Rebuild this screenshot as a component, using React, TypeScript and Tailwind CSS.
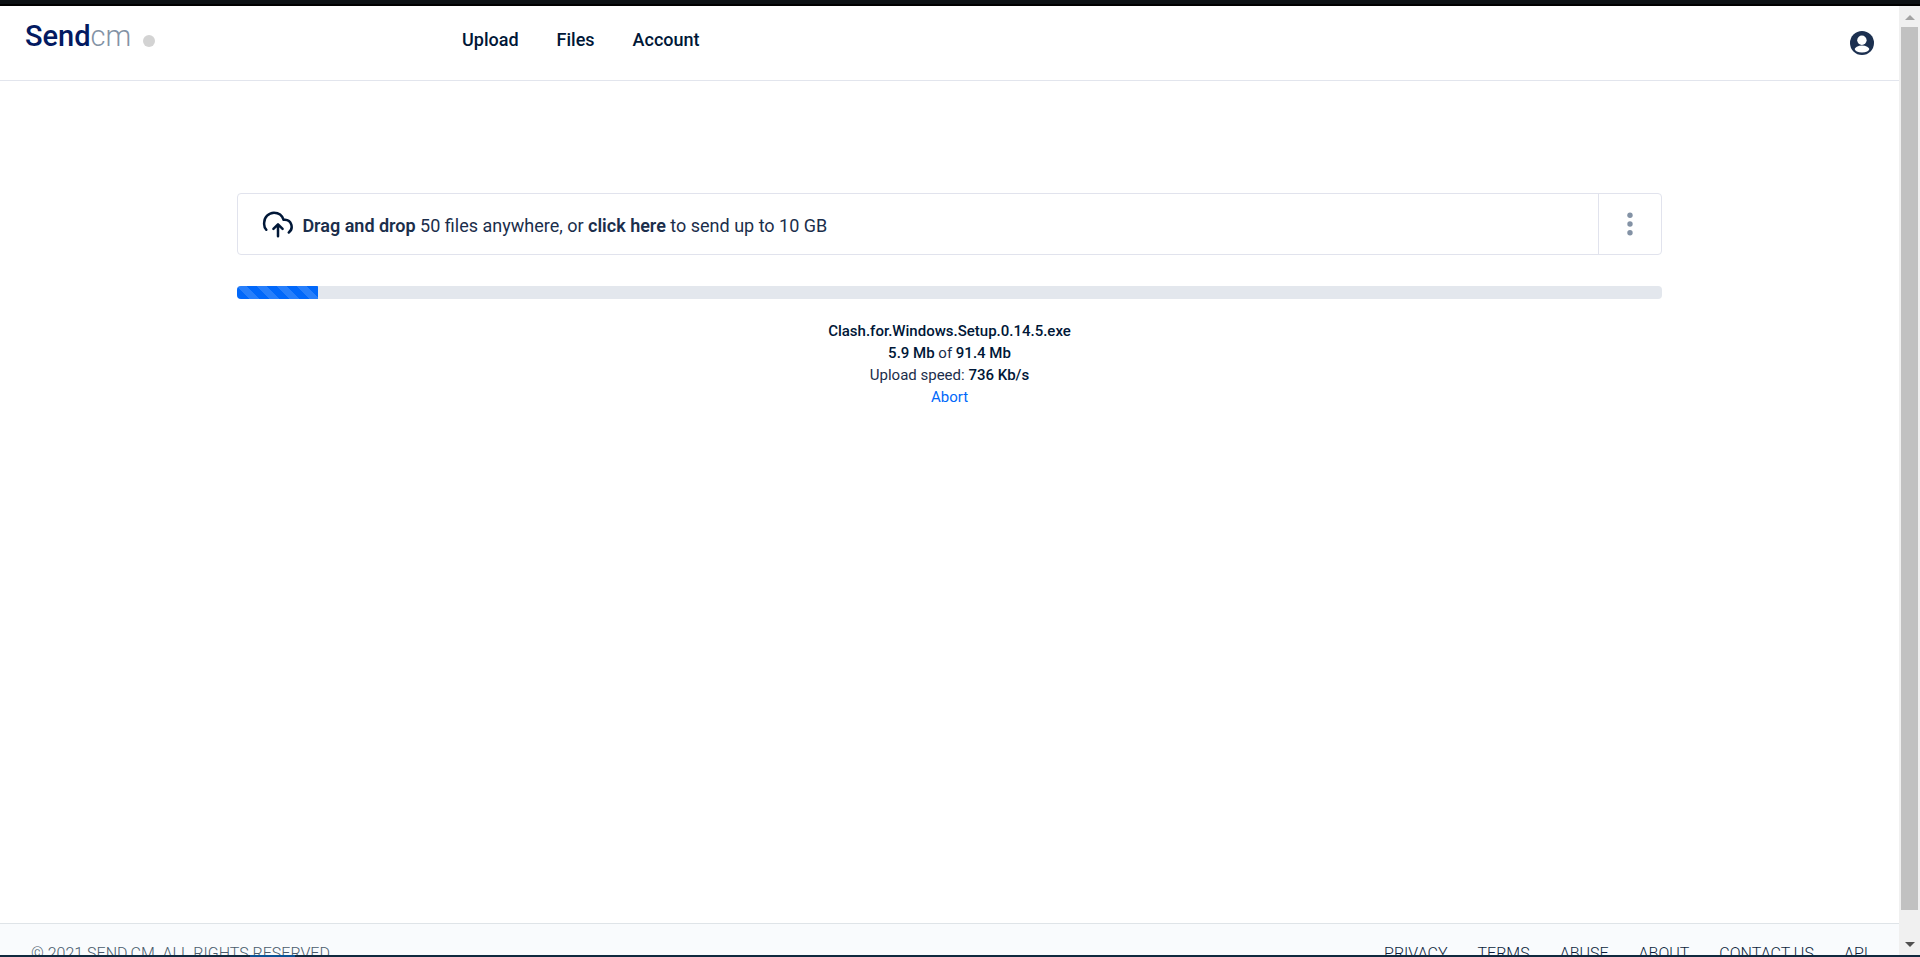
import React from "react";

const navLinks = ["Upload", "Files", "Account"];
const footerLinks = ["Privacy", "Terms", "Abuse", "About", "Contact us", "API"];
const progress = 5.65;

function CloudUploadIcon() {
  return (
    <svg className="h-7 w-8 shrink-0" viewBox="0 0 32 28" fill="none" stroke="#001737" aria-hidden="true">
      <path
        d="M4.3 19.8A9.3 9.3 0 0 1 2.2 12.6 10 10 0 0 1 12 2.7c4.6 0 8.3 3 9.6 7.1h1.3a7 7 0 0 1 3.9 12.6"
        strokeWidth="2.5"
        strokeLinecap="round"
        strokeLinejoin="round"
      />
      <path d="M16 26.2V14.8M11.4 18.9 16 14.3l4.6 4.6" strokeWidth="2.5" strokeLinecap="round" strokeLinejoin="round" />
    </svg>
  );
}

function UserIcon() {
  return (
    <svg className="h-6 w-6" viewBox="0 0 24 24" aria-hidden="true">
      <circle cx="12" cy="12" r="12" fill="#1c3050" />
      <circle cx="11.9" cy="9.2" r="4.7" fill="#fff" />
      <ellipse cx="12" cy="18.1" rx="7.3" ry="3.5" fill="#fff" />
    </svg>
  );
}

function Header() {
  return (
    <header className="flex h-[75px] shrink-0 items-start border-b border-[#e2e5ed] px-[25px]">
      <a href="#home" className="flex w-[437px] shrink-0 items-start pt-3 text-[29px] leading-9">
        <span className="font-medium text-[#031a61]">Send</span>
        <span className="font-light text-[#8392a5]">cm</span>
        <span className="mt-[17px] ml-3 h-3 w-3 rounded-full bg-[#d3d3d3]" />
      </a>
      <nav className="flex gap-[38px] pt-[21px] text-[18px] leading-[26px] font-medium text-[#001737]">
        {navLinks.map((label) => (
          <a key={label} href={`#${label.toLowerCase()}`}>
            {label}
          </a>
        ))}
      </nav>
      <button type="button" aria-label="Account menu" className="mt-[25px] ml-auto">
        <UserIcon />
      </button>
    </header>
  );
}

function UploadPanel() {
  return (
    <main className="mx-auto w-3/4 grow pt-28 text-[#1b2e4b]">
      <div className="flex h-[62px] rounded-[4px] border border-[#e1e3ed]">
        <button type="button" className="flex grow items-center gap-2 pl-6 text-left text-[18px] leading-6">
          <CloudUploadIcon />
          <span className="pt-1">
            <strong className="font-semibold">Drag and drop</strong> 50 files anywhere, or{" "}
            <strong className="font-semibold">click here</strong> to send up to 10 GB
          </span>
        </button>
        <button
          type="button"
          aria-label="Upload options"
          className="flex w-[63px] shrink-0 items-center justify-center border-l border-[#e1e3ed]"
        >
          <svg className="h-6 w-6" viewBox="0 0 24 24" fill="#8392a5" aria-hidden="true">
            <circle cx="12" cy="3.2" r="2.7" />
            <circle cx="12" cy="12" r="2.7" />
            <circle cx="12" cy="20.8" r="2.7" />
          </svg>
        </button>
      </div>
      <div
        role="progressbar"
        aria-label="Upload progress"
        aria-valuenow={progress}
        className="mt-[31px] h-[13px] overflow-hidden rounded-[4px] bg-[#e3e7ed]"
      >
        <div
          className="h-full bg-[#0168fa] bg-[linear-gradient(45deg,rgba(255,255,255,.15)_25%,transparent_25%,transparent_50%,rgba(255,255,255,.15)_50%,rgba(255,255,255,.15)_75%,transparent_75%,transparent)] bg-[length:20px_20px]"
          style={{ width: `${progress}%` }}
        />
      </div>
      <div className="mt-[21px] text-center text-[15px] leading-[22px]">
        <p className="font-medium text-[#001737]">Clash.for.Windows.Setup.0.14.5.exe</p>
        <p>
          <strong className="font-medium text-[#001737]">5.9 Mb</strong> of{" "}
          <strong className="font-medium text-[#001737]">91.4 Mb</strong>
        </p>
        <p>
          Upload speed: <strong className="font-medium text-[#001737]">736 Kb/s</strong>
        </p>
        <a href="#abort" className="text-[#0168fa]">
          Abort
        </a>
      </div>
    </main>
  );
}

function Footer() {
  return (
    <footer className="flex h-8 shrink-0 justify-between overflow-hidden border-t border-[#dfe4e8] bg-[#f9fbfd] px-[31px] pt-[18px] text-[16px] leading-6 font-light uppercase">
      <span className="text-[#4a5b6c]">© 2021 Send.cm. All rights reserved.</span>
      <nav className="flex gap-[30px] text-[#0c1f3c]">
        {footerLinks.map((label) => (
          <a key={label} href={`#${label.toLowerCase().replace(" ", "-")}`}>
            {label}
          </a>
        ))}
      </nav>
    </footer>
  );
}

function ScrollTrack() {
  return (
    <div className="flex w-[21px] shrink-0 flex-col items-center bg-[#f0f0f0]" aria-hidden="true">
      <svg className="mt-[9px] mb-[7px] h-[5px] w-[10px] shrink-0" viewBox="0 0 10 5">
        <path d="M0 5 5 0l5 5z" fill="#a3a3a3" />
      </svg>
      <div className="w-[17px] grow bg-[#c1c1c1]" />
      <svg className="mt-8 mb-[8px] h-[5px] w-[10px] shrink-0" viewBox="0 0 10 5">
        <path d="M0 0 5 5l5-5z" fill="#505050" />
      </svg>
    </div>
  );
}

export default function App() {
  return (
    <div className="flex h-screen flex-col overflow-hidden bg-white font-['Roboto',sans-serif]">
      <div className="h-[6px] shrink-0 border-b-2 border-black bg-[#0d1114]" />
      <div className="flex min-h-0 grow">
        <div className="flex min-w-0 grow flex-col">
          <Header />
          <UploadPanel />
          <Footer />
        </div>
        <ScrollTrack />
      </div>
      <div className="flex h-[2px] shrink-0 bg-[#10293e]">
        <div className="ml-[250px] w-[45px] bg-[#0a5294]" />
      </div>
    </div>
  );
}
